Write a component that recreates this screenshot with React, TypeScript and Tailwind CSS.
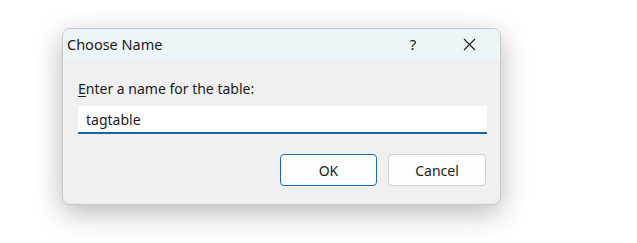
import React from "react";

export default function App() {
  return (
    <div
      className="w-[637px] h-[243px] bg-white overflow-hidden pt-[28px] pl-[62px]"
      style={{ fontFamily: '"Noto Sans", "Open Sans", sans-serif' }}
    >
      <div className="w-[439px] h-[177px] rounded-[8px] bg-[#f0f0f0] border border-[#c8c8c8] shadow-[0_8px_28px_rgba(0,0,0,0.28)] flex flex-col overflow-hidden">
        <div className="h-[31px] bg-[#eef5f9] flex items-center pl-[4px] text-[14.5px] text-[#1a1a1a]">
          <span className="flex-1">Choose Name</span>
          <span className="w-[40px] text-center text-[15px] mr-[11px]">?</span>
          <span className="w-[50px] flex items-center justify-center mr-[6px]">
            <svg width="13" height="13" viewBox="0 0 13 13">
              <path d="M1 1L12 12M12 1L1 12" stroke="#1a1a1a" strokeWidth="1.1" fill="none" />
            </svg>
          </span>
        </div>
        <div className="flex-1 flex flex-col pl-[15px] pr-[13px] pt-[20px]">
          <div className="text-[14px] text-[#1a1a1a] leading-[18px]">
            <span className="underline underline-offset-2">E</span>nter a name for the table:
          </div>
          <div className="mt-[8px] h-[28px] bg-white border-b-2 border-[#1467a8] flex items-center pl-[8px] text-[14px] text-[#1a1a1a]">
            tagtable
          </div>
          <div className="mt-[20px] flex justify-end gap-[11px] pr-[1px]">
            <button className="w-[97px] h-[32px] rounded-[4px] bg-[#fdfdfd] border border-[#1a6cb0] text-[14px] text-[#1a1a1a]">
              OK
            </button>
            <button className="w-[98px] h-[32px] rounded-[4px] bg-[#fdfdfd] border border-[#d0d0d0] text-[14px] text-[#1a1a1a]">
              Cancel
            </button>
          </div>
        </div>
      </div>
    </div>
  );
}
